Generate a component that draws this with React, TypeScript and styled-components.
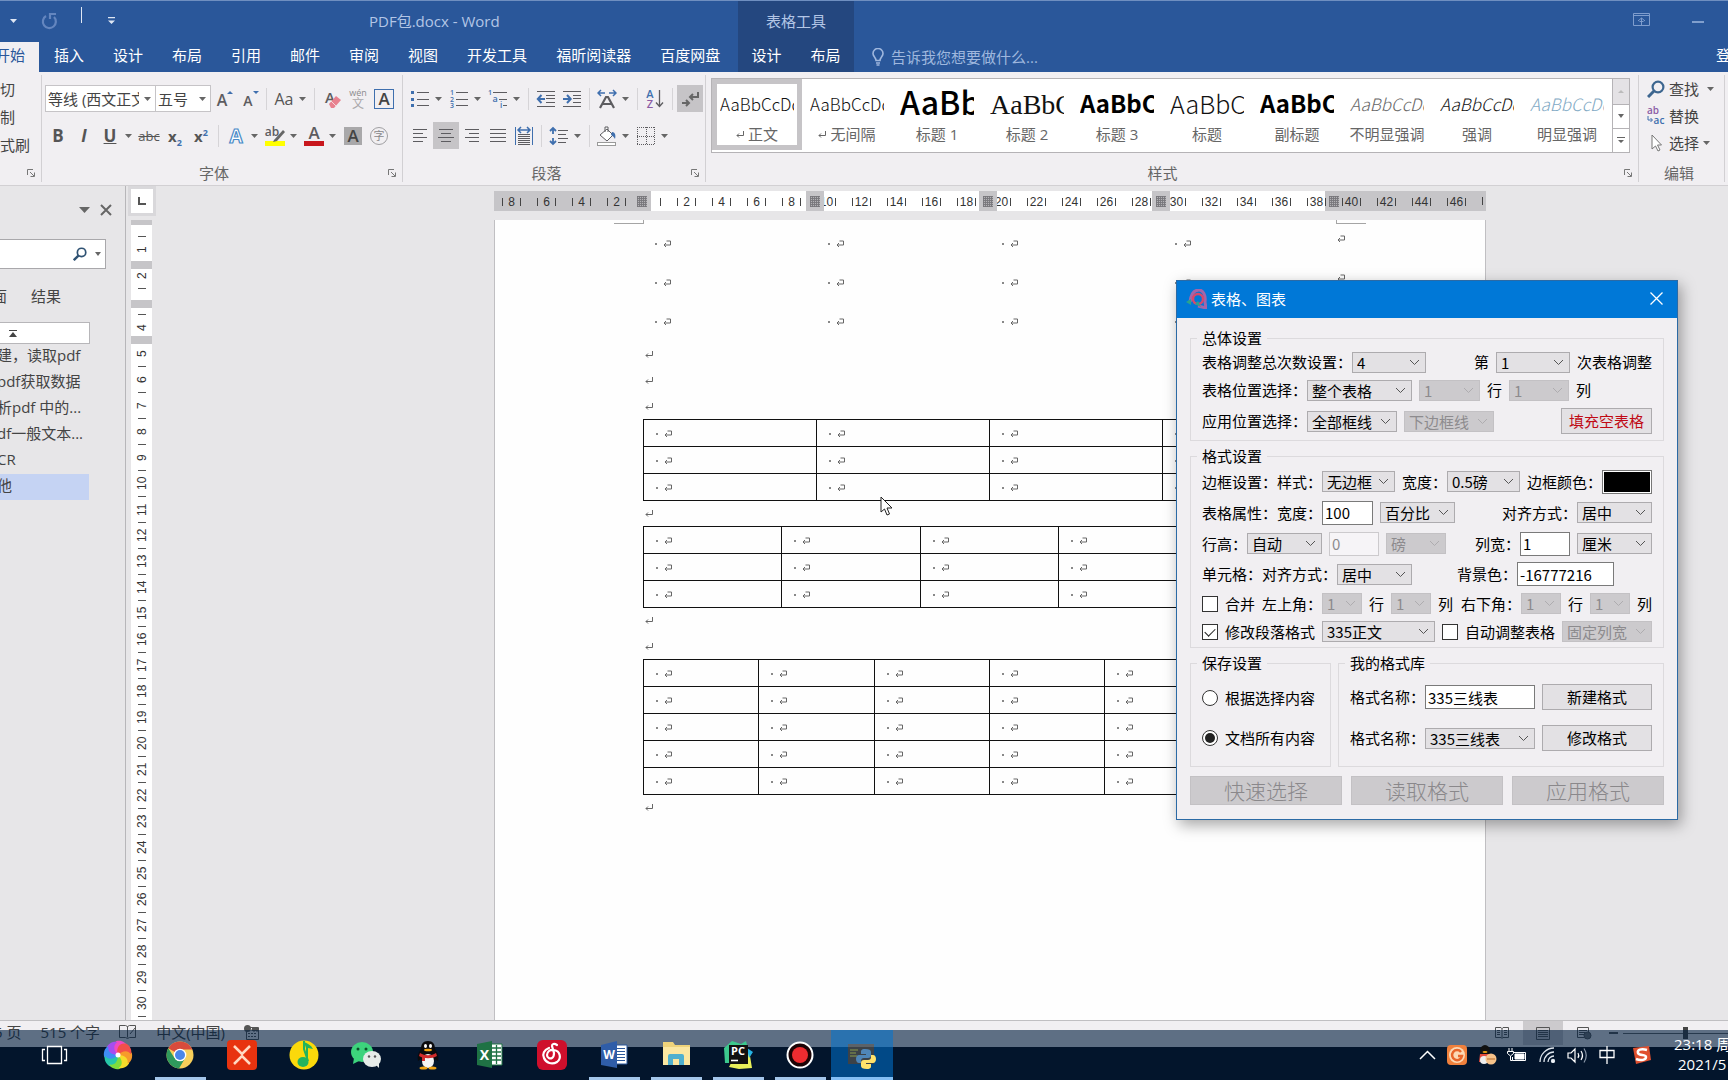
import React, { ReactNode, useState } from "react";
import styled, { createGlobalStyle, css } from "styled-components";

const ui = `"Open Sans", "Noto Sans CJK SC", sans-serif`;
const cjk = `"Noto Sans CJK SC", sans-serif`;
const ink = "#5d5c60";
const accent = "#3f6fae";

const Global = createGlobalStyle`
  * { box-sizing: border-box; }
  body { margin: 0; background: #080a10; overflow: hidden; }
  button, input, select { font: inherit; color: inherit; margin: 0; padding: 0; border: 0; border-radius: 0; background: none; }
  svg { display: block; flex: none; }
`;

const Screen = styled.div`
  position: relative;
  height: 100vh;
  display: flex;
  flex-direction: column;
  overflow: hidden;
  font: 15px/20px ${ui};
  color: #444;
`;

/* ---------- title bar and tabs ---------- */
const Header = styled.header`
  height: 72px;
  flex: none;
  display: flex;
  background: #2a579a;
  border-top: 1px solid #6f8fc0;
  white-space: nowrap;
`;
const HeaderMain = styled.div`
  width: 738px;
  flex: none;
  display: flex;
  flex-direction: column;
`;
const TitleLine = styled.div`
  height: 41px;
  padding-bottom: 2px;
  display: flex;
  align-items: center;
  color: #b3c6e6;
`;
const QuickBar = styled.div`
  width: 369px;
  padding-left: 10px;
  display: flex;
  align-items: center;
`;
const QuickButton = styled.button<{ $gap?: number }>`
  display: flex;
  margin-right: ${(p) => p.$gap ?? 0}px;
`;
const QuickRule = styled.span`
  width: 1px;
  height: 16px;
  margin: 0 26px 12px 23px;
  background: #dfe7f4;
`;
const Tabs = styled.nav`
  height: 30px;
  display: flex;
  gap: 29px;
  color: #fff;
`;
const Tab = styled.button`
  height: 30px;
  padding-bottom: 4px;
`;
const ActiveTab = styled(Tab)`
  width: 39px;
  margin-right: -14px;
  text-align: right;
  padding-right: 14px;
  direction: rtl;
  background: #f1eff2;
  color: #2a579a;
  overflow: hidden;
`;
const ContextGroup = styled.div`
  width: 116px;
  flex: none;
  display: flex;
  flex-direction: column;
  align-items: center;
  background: #24477f;
`;
const HeaderRight = styled.div`
  flex: 1;
  display: flex;
  flex-direction: column;
`;
const WindowButtons = styled.div`
  height: 41px;
  padding: 0 24px 4px 0;
  display: flex;
  align-items: center;
  justify-content: flex-end;
  gap: 42px;
`;
const TellLine = styled.div`
  height: 30px;
  display: flex;
  align-items: center;
  justify-content: space-between;
  padding-left: 18px;
  overflow: hidden;
`;
const Tell = styled.button`
  display: flex;
  align-items: center;
  gap: 7px;
  color: #9fb7de;
`;
const SignIn = styled(Tab)`
  width: 12px;
  color: #fff;
`;

/* ---------- ribbon ---------- */
const Ribbon = styled.div`
  height: 114px;
  flex: none;
  display: flex;
  padding: 3px 3px 3px 0;
  background: #f1eff2;
  border-bottom: 1px solid #d2d0d3;
  white-space: nowrap;
`;
const Group = styled.section<{ $w?: number; $pad?: number }>`
  ${(p) => (p.$w ? `width: ${p.$w}px; flex: none;` : "flex: 1; min-width: 0;")}
  padding-left: ${(p) => p.$pad ?? 0}px;
  border-right: 1px solid #d2d0d3;
  display: flex;
  flex-direction: column;
`;
const GroupBody = styled.div<{ $top?: number; $gap?: number }>`
  flex: 1;
  padding-top: ${(p) => p.$top ?? 0}px;
  display: flex;
  flex-direction: column;
  gap: ${(p) => p.$gap ?? 0}px;
`;
const GroupFoot = styled.div`
  height: 20px;
  display: flex;
  align-items: center;
  margin-bottom: -1px;
  color: #666;
`;
const FootLabel = styled.span`
  flex: 1;
  padding-right: 5px;
  text-align: center;
`;
const Launcher = styled.button`
  width: 14px;
  display: flex;
`;
const ToolRow = styled.div`
  height: 27px;
  display: flex;
  align-items: center;
`;
const Tool = styled.button<{ $split?: boolean; $on?: boolean }>`
  width: ${(p) => (p.$split ? 39 : 26)}px;
  height: 27px;
  flex: none;
  display: flex;
  align-items: center;
  gap: 2px;
  background: ${(p) => (p.$on ? "#c6c4c7" : "none")};
`;
const ToolFace = styled.span`
  width: 26px;
  display: flex;
  justify-content: center;
`;
const Sep = styled.span`
  width: 1px;
  height: 22px;
  margin: 0 4px;
  background: #d6d4d7;
`;
const Glyph = styled.span<{ $b?: boolean; $i?: boolean; $u?: boolean; $s?: boolean; $size?: number }>`
  font: ${(p) => (p.$i ? "italic" : "normal")} ${(p) => (p.$b ? 700 : 400)} ${(p) => p.$size ?? 17}px/20px ${ui};
  text-decoration: ${(p) => (p.$u ? "underline" : p.$s ? "line-through" : "none")};
  color: #555;
  sub, sup { font-size: 9px; line-height: 0; color: ${accent}; }
`;
const Combo = styled.label<{ $w: number }>`
  width: ${(p) => p.$w}px;
  height: 27px;
  margin-right: -1px;
  display: flex;
  align-items: center;
  gap: 5px;
  padding: 0 4px 0 2px;
  background: #fff;
  border: 1px solid #c6c4c7;
  input { flex: 1; min-width: 0; height: 25px; outline: none; color: #444; }
`;
const ClipItem = styled.button`
  height: 28px;
  text-align: left;
`;
const EditItem = styled.button`
  height: 27px;
  display: flex;
  align-items: center;
  gap: 4px;
  padding-left: 8px;
`;

/* ---------- style gallery ---------- */
const Gallery = styled.div`
  height: 75px;
  margin: 3px 8px 0 5px;
  display: flex;
  background: #fff;
  border: 1px solid #b5b3b6;
`;
const StyleList = styled.div`
  flex: 1;
  display: flex;
  overflow: hidden;
`;
const StyleItem = styled.button<{ $on?: boolean }>`
  width: 90px;
  height: 71px;
  flex: none;
  padding: 0 3px;
  border: 5px solid ${(p) => (p.$on ? "#c6c4c7" : "transparent")};
  display: flex;
  flex-direction: column;
  align-items: center;
  color: #666;
`;
const Preview = styled.span<{ $kind: string }>`
  width: 74px;
  height: 40px;
  overflow: hidden;
  text-align: left;
  color: #111;
  font: 300 17px/40px ${cjk};
  ${(p) => p.$kind === "h1" && css`font-size: 32px; line-height: 35px; font-weight: 500; color: #000;`}
  ${(p) => p.$kind === "h2" && css`font: 28px/42px "Liberation Serif", serif;`}
  ${(p) => p.$kind === "h3" && css`font-size: 24px; font-weight: 700; line-height: 38px; color: #000;`}
  ${(p) => p.$kind === "title" && css`font-size: 25px; line-height: 38px;`}
  ${(p) => p.$kind === "soft" && css`font-style: italic; color: #666;`}
  ${(p) => p.$kind === "em" && css`font-style: italic;`}
  ${(p) => p.$kind === "strong" && css`font-style: italic; color: #7fa9c4;`}
`;
const StyleName = styled.span`
  display: flex;
  align-items: center;
  gap: 4px;
`;
const GalleryNav = styled.div`
  width: 17px;
  display: grid;
  grid-template-rows: 26px 1fr 1fr;
  border-left: 1px solid #b5b3b6;
  button { display: grid; place-items: center; border-bottom: 1px solid #b5b3b6; }
  button:first-child { background: #e4e2e5; }
  button:last-child { border-bottom: 0; }
`;

/* ---------- workspace ---------- */
const Workspace = styled.main`
  flex: 1;
  min-height: 0;
  display: flex;
  background: #e7e6e8;
  overflow: hidden;
`;
const NavPane = styled.aside`
  width: 126px;
  flex: none;
  border-right: 1px solid #b7b6b9;
  overflow: hidden;
  white-space: nowrap;
`;
const PaneTop = styled.div`
  height: 53px;
  padding: 0 13px 5px 0;
  display: flex;
  align-items: center;
  justify-content: flex-end;
  gap: 10px;
`;
const PaneSearch = styled.label`
  width: 106px;
  height: 30px;
  display: flex;
  align-items: center;
  gap: 8px;
  padding-right: 4px;
  background: #fff;
  border: 1px solid #a9a8ab;
  border-left: 0;
  input { flex: 1; min-width: 0; outline: none; }
`;
const PaneTabs = styled.div`
  height: 53px;
  display: flex;
  align-items: center;
  gap: 24px;
  margin-left: -8px;
  padding-top: 5px;
`;
const PaneJump = styled.button`
  width: 90px;
  height: 22px;
  display: flex;
  align-items: center;
  padding-left: 9px;
  background: #fff;
  border: 1px solid #b7b6b9;
  border-left: 0;
`;
const Outline = styled.ul`
  list-style: none;
  margin: 0;
  padding: 0;
  width: 89px;
`;
const OutlineItem = styled.li<{ $on?: boolean }>`
  height: 26px;
  background: ${(p) => (p.$on ? "#c5d3f3" : "none")};
  a { display: block; margin-left: -3px; line-height: 22px; color: #444; text-decoration: none; }
`;
const RulerColumn = styled.div`
  width: 30px;
  flex: none;
  display: flex;
  flex-direction: column;
  padding-left: 2px;
`;
const Corner = styled.button`
  width: 28px;
  height: 30px;
  flex: none;
  margin-bottom: 4px;
  display: grid;
  place-items: center;
  background: #fff;
  border: 3px solid #d9d8db;
`;
const VRuler = styled.div`
  position: relative;
  flex: 1;
  width: 21px;
  margin-left: 3px;
  padding-top: 16px;
  background: #fff;
  overflow: hidden;
`;
const VCell = styled.div`
  height: 26px;
  display: flex;
  flex-direction: column;
  align-items: center;
  font: 12px/14px "Liberation Sans", sans-serif;
  color: #333;
  &::before { content: ""; width: 8px; height: 1px; flex: none; background: #555; }
  span { flex: 1; writing-mode: vertical-rl; transform: rotate(180deg); text-align: center; }
`;
const VBand = styled.i<{ $y: number }>`
  position: absolute;
  left: 0;
  right: 0;
  top: ${(p) => p.$y}px;
  height: 8px;
  background: #c6c5c8;
`;
const DocColumn = styled.div`
  width: 992px;
  flex: none;
  margin-left: 338px;
  padding-top: 5px;
  display: flex;
  flex-direction: column;
`;
const HRuler = styled.div`
  position: relative;
  height: 20px;
  flex: none;
  margin-bottom: 9px;
  display: flex;
  align-items: center;
  background: linear-gradient(to right, #c6c5c8 157px, #fff 157px, #fff 831px, #c6c5c8 831px);
`;
const HCell = styled.span`
  width: 35px;
  padding: 1px 8px 0;
  flex: none;
  display: flex;
  justify-content: space-between;
  align-items: center;
  font: 12px/14px "Liberation Sans", sans-serif;
  color: #333;
  &::before, &::after { content: ""; width: 1px; height: 8px; background: #444; flex: none; }
`;
const HEnd = styled.span`
  width: 1px;
  height: 8px;
  margin-left: 8px;
  background: #444;
`;
const HMark = styled.i<{ $x: number; $w?: number }>`
  position: absolute;
  left: ${(p) => p.$x}px;
  top: 0;
  width: ${(p) => p.$w ?? 18}px;
  height: 20px;
  display: grid;
  place-items: center;
  background: #c6c5c8;
`;
const Paper = styled.article`
  position: relative;
  flex: 1;
  padding: 3px 149px 0 148px;
  background: #fefefe;
  border: solid #c0bfc2;
  border-width: 0 1px;
`;
const MarginMark = styled.i<{ $right?: boolean }>`
  position: absolute;
  top: 0;
  width: 30px;
  height: 4px;
  border-bottom: 1px solid #a5a5a5;
  ${(p) => (p.$right ? "right: 119px; border-left: 1px solid #a5a5a5;" : "left: 119px; border-right: 1px solid #a5a5a5;")}
`;
const Para = styled.p`
  margin: 0;
  height: 26px;
  display: flex;
  align-items: center;
  padding: 1px 0 0 2px;
`;
const DocTable = styled.table<{ $plain?: boolean }>`
  width: 100%;
  table-layout: fixed;
  border-collapse: collapse;
  margin-bottom: ${(p) => (p.$plain ? 1 : -1)}px;
  td {
    position: relative;
    height: ${(p) => (p.$plain ? 39 : 27)}px;
    padding: 2px 0 0 12px;
    border: ${(p) => (p.$plain ? "0" : "1px solid #111")};
  }
`;
const CellEnd = styled.span`
  display: flex;
  align-items: center;
  gap: 6px;
  &::before { content: ""; width: 2px; height: 2px; background: #888; }
`;
const RowEnd = styled.span`
  position: absolute;
  right: -10px;
  top: 12px;
`;
const Pointer = styled.svg`
  position: absolute;
  left: 880px;
  top: 496px;
`;

/* ---------- status bar ---------- */
const Status = styled.footer`
  height: 27px;
  flex: none;
  margin-bottom: 33px;
  display: flex;
  align-items: center;
  justify-content: space-between;
  background: #f1eff2;
  border-top: 1px solid #c0bfc2;
  white-space: nowrap;
  overflow: hidden;
`;
const StatusLeft = styled.div`
  display: flex;
  align-items: center;
  gap: 19px;
  margin-left: -6px;
  padding-bottom: 4px;
`;
const StatusRight = styled.div`
  height: 100%;
  padding-bottom: 2px;
  display: flex;
  align-items: center;
`;
const ViewButton = styled.button<{ $on?: boolean }>`
  width: ${(p) => (p.$on ? 40 : 42)}px;
  height: 100%;
  display: grid;
  place-items: center;
  background: ${(p) => (p.$on ? "#cccacd" : "none")};
`;
const Zoom = styled.input`
  appearance: none;
  width: 128px;
  height: 14px;
  margin: 0 -23px 0 4px;
  background: linear-gradient(#666, #666) center / 100% 1px no-repeat;
  &::-webkit-slider-thumb { appearance: none; width: 5px; height: 12px; background: #444; }
`;

/* ---------- taskbar ---------- */
const Taskbar = styled.div`
  position: absolute;
  left: 0;
  right: 0;
  bottom: 0;
  height: 50px;
  display: flex;
  justify-content: space-between;
  background: rgba(0, 30, 62, 0.61);
  overflow: hidden;
`;
const Apps = styled.div`
  display: flex;
  margin-left: -37px;
`;
const App1 = styled.button<{ $state?: string }>`
  width: 62px;
  height: 50px;
  display: grid;
  place-items: center;
  position: relative;
  background: ${(p) => (p.$state === "active" ? "rgba(0, 116, 212, 0.55)" : "none")};
  &::after {
    content: "";
    display: ${(p) => (p.$state ? "block" : "none")};
    position: absolute;
    bottom: 0;
    left: ${(p) => (p.$state === "active" ? 0 : 6)}px;
    right: ${(p) => (p.$state === "active" ? 0 : 5)}px;
    height: 3px;
    background: ${(p) => (p.$state === "active" ? "#84bff5" : "#a4c6ea")};
  }
`;
const Tray = styled.div`
  display: flex;
  align-items: center;
  color: #fff;
`;
const TrayButton = styled.button<{ $w?: number }>`
  width: ${(p) => p.$w ?? 30}px;
  display: grid;
  place-items: center;
`;
const Clock = styled.time`
  width: 54px;
  margin-left: 12px;
  padding-bottom: 2px;
  display: flex;
  flex-direction: column;
  align-items: flex-start;
  white-space: nowrap;
  span + span { padding-left: 4px; }
`;

/* ---------- dialog ---------- */
const Dialog = styled.form`
  position: absolute;
  left: 1176px;
  top: 280px;
  width: 502px;
  border: 1px solid #2b6aa5;
  background: #f1eff2;
  box-shadow: 3px 5px 14px rgba(0, 0, 0, 0.35);
  font: 15px/20px ${cjk};
  color: #000;
  white-space: nowrap;
`;
const DialogTitle = styled.div`
  height: 37px;
  display: flex;
  align-items: center;
  gap: 4px;
  padding: 0 14px 2px 9px;
  background: #0078d7;
  color: #fff;
  button { margin-left: auto; }
`;
const DialogBody = styled.div`
  padding: 10px 13px 14px;
  display: flex;
  flex-direction: column;
  gap: 5px;
`;
const Box = styled.fieldset<{ $bottom?: number }>`
  min-width: 0;
  margin: 0;
  padding: 0 11px ${(p) => p.$bottom ?? 2}px 11px;
  border: 1px solid #dcdadd;
  legend { height: 20px; padding: 0 5px; margin-left: -5px; }
`;
const Pair = styled.div`
  display: grid;
  grid-template-columns: 141px 1fr;
  gap: 7px;
`;
const Line = styled.div<{ $h: number }>`
  height: ${(p) => p.$h}px;
  display: flex;
  align-items: center;
  gap: 7px;
`;
const Field = styled.label<{ $gap?: boolean; $push?: boolean; $pr?: number }>`
  display: flex;
  align-items: center;
  gap: ${(p) => (p.$gap ? 7 : 0)}px;
  margin-left: ${(p) => (p.$push ? "auto" : "0")};
  padding-right: ${(p) => p.$pr ?? 0}px;
`;
const Pick = styled.span<{ $w: number }>`
  width: ${(p) => p.$w}px;
  display: grid;
  align-items: center;
  > * { grid-area: 1 / 1; }
  > svg { justify-self: end; margin-right: 6px; pointer-events: none; }
  select {
    appearance: none;
    width: 100%;
    height: 21px;
    padding-left: 4px;
    line-height: 19px;
    background: #e3e1e4;
    border: 1px solid #adabae;
    opacity: 1;
  }
  select:disabled { background: #cccacd; border-color: #c3c1c4; color: #8d8b8e; }
`;
const Text = styled.input<{ $w: number }>`
  width: ${(p) => p.$w}px;
  height: 24px;
  padding-left: 2px;
  background: #fff;
  border: 1px solid #7a7a7a;
  &:disabled { background: #f6f4f7; border-color: #cccacd; color: #8d8b8e; }
`;
const Swatch = styled.button`
  width: 50px;
  height: 24px;
  background: #000;
  border: 1px solid #777;
  box-shadow: inset 0 0 0 1px #fff;
`;
const Check = styled.input`
  appearance: none;
  width: 16px;
  height: 16px;
  flex: none;
  background: #fff;
  border: 1px solid #333;
  &:checked::after {
    content: "";
    display: block;
    width: 9px;
    height: 5px;
    margin: 3px 0 0 2px;
    border: solid #222;
    border-width: 0 0 1px 1px;
    transform: rotate(-45deg);
  }
`;
const Radio = styled(Check)`
  border-radius: 50%;
  &:checked::after {
    width: 10px;
    height: 10px;
    margin: 2px;
    border: 0;
    border-radius: 50%;
    background: #222;
    transform: none;
  }
`;
const Push = styled.button<{ $red?: boolean }>`
  height: 26px;
  flex: ${(p) => (p.$red ? "none" : 1)};
  width: ${(p) => (p.$red ? "91px" : "auto")};
  margin-left: ${(p) => (p.$red ? "auto" : "0")};
  background: #e3e1e4;
  border: 1px solid #adabae;
  color: ${(p) => (p.$red ? "#c00a14" : "#000")};
`;
const Actions = styled.div`
  margin-top: 4px;
  display: grid;
  grid-template-columns: repeat(3, 1fr);
  gap: 9px;
`;
const BigButton = styled.button`
  height: 29px;
  background: #cccacd;
  border: 1px solid #c3c1c4;
  font-size: 21px;
  line-height: 25px;
  font-weight: 300;
  color: #8a888b;
`;

/* ---------- small drawings ---------- */
const Caret = ({ c = "#666", s = 7 }: { c?: string; s?: number }) => (
  <svg width={s} height={s > 8 ? 6 : 4} viewBox="0 0 8 4" preserveAspectRatio="none"><path d="M0 0h8L4 4z" fill={c} /></svg>
);
const Bars = ({ rows, x = 0 }: { rows: [number, number][]; x?: number }) => (
  <>{rows.map(([a, b], i) => <path key={i} d={`M${x + a} ${2.5 + i * 4}H${x + b}`} stroke={ink} />)}</>
);
const Ico = ({ children, w = 20, h = 20 }: { children: ReactNode; w?: number; h?: number }) => (
  <svg width={w} height={h} viewBox={`0 0 ${w} ${h}`} fill="none">{children}</svg>
);
const ParaMark = () => (
  <svg width="8" height="7" viewBox="0 0 8 7" fill="none" stroke="#666"><path d="M7.5 0v4.5H1M3 2.5l-2 2 2 2" /></svg>
);
const CellMark = () => (
  <svg width="9" height="8" viewBox="0 0 9 8" fill="none" stroke="#666"><path d="M3.5 1h4v4H1M3 3L1 5l2 2" /></svg>
);
const Hatch = () => (
  <svg width="10" height="11" viewBox="0 0 10 11"><rect width="10" height="11" fill="#b4b3b6" /><path d="M.5 0v11M2.5 0v11M4.5 0v11M6.5 0v11M8.5 0v11M0 .5h10M0 2.5h10M0 4.5h10M0 6.5h10M0 8.5h10M0 10.5h10" stroke="#77767a" strokeWidth=".9" /></svg>
);
const Lens = ({ s = 18, c = "#3d668f" }: { s?: number; c?: string }) => (
  <svg width={s} height={s} viewBox="0 0 18 18" fill="none" stroke={c} strokeWidth="2.2"><circle cx="11" cy="7" r="5.4" /><path d="M7 11L1 17" strokeWidth="3" /></svg>
);
const LauncherIcon = () => (
  <svg width="8" height="8" viewBox="0 0 8 8" fill="none" stroke="#777"><path d="M.5 6V.5H6M3 3l4 4M7.5 3.5v4h-4" /></svg>
);

const LETTER = (txt: string, size = 17, weight = 600, fill = ink, x = 10, y = 16) => (
  <text x={x} y={y} fontSize={size} fontWeight={weight} fill={fill} textAnchor="middle" fontFamily="Open Sans, sans-serif">{txt}</text>
);

const icons: Record<string, ReactNode> = {
  grow: <Ico>{LETTER("A", 16, 600, ink, 9, 17)}<path d="M14 5l3-3 3 3z" fill={accent} /></Ico>,
  shrink: <Ico>{LETTER("A", 14, 600, ink, 9, 17)}<path d="M14 2h6l-3 3z" fill={accent} /></Ico>,
  clear: <Ico>{LETTER("A", 15, 600, ink, 8, 14)}<path d="M7 15l7-8 5 4-7 8H9z" fill="#e8818f" /><path d="M9 12l5 5" stroke="#f5d5da" /></Ico>,
  wen: <Ico>{LETTER("wén", 9, 400, "#8a8a8c", 10, 7)}<text x="10" y="19" fontSize="12" fill="#aaa8ab" textAnchor="middle" fontFamily="Noto Sans CJK SC">文</text></Ico>,
  frame: <Ico><rect x=".5" y=".5" width="19" height="19" stroke="#3f6fae" />{LETTER("A", 17, 600, "#444")}</Ico>,
  outlineA: <Ico><text x="10" y="17" fontSize="19" fontWeight="700" fill="#fff" stroke="#4a8bc8" strokeWidth="1.2" textAnchor="middle" fontFamily="Open Sans">A</text></Ico>,
  marker: <Ico w={22} h={22}><rect x="1" y="16" width="20" height="5" fill="#ffff00" />{LETTER("ab", 12, 600, ink, 8, 11)}<path d="M10 15l9-10 2 2-8 9-4 1z" fill="#666" /></Ico>,
  red: <Ico w={22} h={22}>{LETTER("A", 17, 600, ink, 11, 14)}<rect x="1" y="16" width="20" height="5" fill="#c8161d" /></Ico>,
  shade: <Ico w={18}><rect y="1" width="18" height="18" fill="#a9a8aa" />{LETTER("A", 17, 600, "#444", 9, 16)}</Ico>,
  circle: <Ico><circle cx="10" cy="10" r="8.5" stroke="#a09fa2" /><text x="10" y="14" fontSize="11" fill="#88878a" textAnchor="middle" fontFamily="Noto Sans CJK SC">字</text></Ico>,
  bullets: <Ico><path d="M1 2h3v3H1zM1 9h3v3H1zM1 15h3v3H1z" fill={accent} /><path d="M7 3.5h12M7 10.5h12M7 16.5h12" stroke={ink} /></Ico>,
  numbers: <Ico>{LETTER("1", 7, 600, accent, 3, 6)}{LETTER("2", 7, 600, accent, 3, 13)}{LETTER("3", 7, 600, accent, 3, 19)}<path d="M7 3.5h12M7 10.5h12M7 16.5h12" stroke={ink} /></Ico>,
  multi: <Ico>{LETTER("1", 7, 600, accent, 2, 6)}{LETTER("a", 9, 600, accent, 7, 13)}{LETTER("i", 8, 600, accent, 13, 19)}<path d="M5 3.5h14M11 10.5h8M15 16.5h4" stroke={ink} /></Ico>,
  outdent: <Ico><path d="M1 2.5h18M10 6.5h9M10 9.5h9M10 13.5h9M1 17.5h18" stroke={ink} /><path d="M9 10H2M5.5 6L1.8 10l3.7 4" stroke={accent} strokeWidth="2" /></Ico>,
  indent: <Ico><path d="M1 2.5h18M11 6.5h8M11 9.5h8M11 13.5h8M1 17.5h18" stroke={ink} /><path d="M1 10h7M5 6l3.7 4L5 14" stroke={accent} strokeWidth="2" /></Ico>,
  scale: <Ico><path d="M1 4h7M4 1L1 4l3 3M19 4h-7M16 1l3 3-3 3" stroke={accent} strokeWidth="1.5" /><path d="M3 19l6-11h2l6 11M6 15h8" stroke={ink} strokeWidth="2.2" /></Ico>,
  sort: <Ico>{LETTER("A", 11, 600, accent, 5, 9)}{LETTER("Z", 11, 600, "#8b5ba5", 5, 19)}<path d="M14.5 1v16M11 13.5l3.5 4 3.5-4" stroke={ink} strokeWidth="1.3" /></Ico>,
  marks: <Ico><path d="M18 3v5h-7M13 5l-3 3 3 3M2 14h7M6 11l3 3-3 3" stroke="#666" strokeWidth="2" /></Ico>,
  left: <Ico h={17}><Bars rows={[[3, 17], [3, 13], [3, 17], [3, 13]]} /></Ico>,
  center: <Ico h={17}><Bars rows={[[3, 17], [5, 15], [2, 18], [5, 15]]} /></Ico>,
  right: <Ico h={17}><Bars rows={[[3, 17], [7, 17], [3, 17], [7, 17]]} /></Ico>,
  justify: <Ico h={17}><Bars rows={[[2, 18], [2, 18], [2, 18], [2, 18]]} /></Ico>,
  spread: <Ico><path d="M1.5 1v18M18.5 1v18" stroke={accent} /><path d="M4 4h12M7 1L4 4l3 3M13 1l3 3-3 3" stroke={accent} strokeWidth="1.5" /><path d="M4 8.5h12M4 10.5h12M4 12.5h12M4 14.5h12M4 16.5h12M4 18.5h12" stroke={ink} /></Ico>,
  spacing: <Ico><path d="M4 2v6M1 5l3-3 3 3M4 12v6M1 15l3 3 3-3" stroke={accent} strokeWidth="1.8" /><path d="M9 4.5h10M9 8.5h8M9 12.5h10M9 16.5h8" stroke={ink} /></Ico>,
  bucket: <Ico><path d="M3 9l7-6 6 6-6 6zM8 6V1h3v5" stroke={ink} fill="#fff" /><path d="M15 6c3 0 4 3 3 7-1-2-2-3-4-4z" fill={accent} /><rect x=".5" y="16.5" width="18" height="3" stroke="#999" fill="#fff" /></Ico>,
  border: <Ico><path d="M1.5 1v18M10.5 1v18M18.5 1v18M1 1.5h18M1 10.5h18M1 18.5h18" stroke={ink} strokeDasharray="1 1" /></Ico>,
};

const T = ({ i, split, on, label }: { i: string; split?: boolean; on?: boolean; label?: ReactNode }) => (
  <Tool $split={split} $on={on} aria-label={i}>
    <ToolFace>{label ?? icons[i]}</ToolFace>
    {split && <Caret />}
  </Tool>
);

const Select = ({ v, w, off }: { v: string; w: number; off?: boolean }) => (
  <Pick $w={w}>
    <select disabled={off} defaultValue={v}><option>{v}</option></select>
    <svg width="11" height="7" viewBox="0 0 11 7" fill="none" stroke={off ? "#aeacaf" : "#555"}><path d="M1 1l4.500 4.500L10 1" /></svg>
  </Pick>
);

const styleItems: [string, string, string, boolean?][] = [
  ["AaBbCcDd", "正文", "body", true],
  ["AaBbCcDd", "无间隔", "body", true],
  ["AaBb", "标题 1", "h1"],
  ["AaBbC", "标题 2", "h2"],
  ["AaBbC", "标题 3", "h3"],
  ["AaBbC", "标题", "title"],
  ["AaBbC", "副标题", "h3"],
  ["AaBbCcDd", "不明显强调", "soft"],
  ["AaBbCcDd", "强调", "em"],
  ["AaBbCcDd", "明显强调", "strong"],
];

const Grid = ({ rows, cols, plain }: { rows: number; cols: number; plain?: boolean }) => (
  <DocTable $plain={plain}>
    <tbody>
      {Array.from({ length: rows }, (_, r) => (
        <tr key={r}>
          {Array.from({ length: cols }, (_, c) => (
            <td key={c}>
              <CellEnd><CellMark /></CellEnd>
              {c === cols - 1 && <RowEnd><CellMark /></RowEnd>}
            </td>
          ))}
        </tr>
      ))}
    </tbody>
  </DocTable>
);
const P = () => <Para><ParaMark /></Para>;

/* ---------- taskbar drawings ---------- */
const Python = () => (
  <g>
    <path d="M9 0C5 0 5 2 5 3v2h5v1H3C1 6 0 8 0 10s1 4 3 4h2v-2c0-2 1-3 3-3h4c2 0 3-1 3-3V3c0-2-2-3-6-3z" fill="#4f86b8" />
    <path d="M11 20c4 0 4-2 4-3v-2h-5v-1h7c2 0 3-2 3-4s-1-4-3-4h-2v2c0 2-1 3-3 3H8c-2 0-3 1-3 3v3c0 2 2 3 6 3z" fill="#ffe26b" />
  </g>
);
const apps: { name: string; state?: string; art: ReactNode }[] = [
  { name: "Cortana", art: <circle cx="12" cy="15" r="7" stroke="#fff" strokeWidth="2.5" fill="none" /> },
  { name: "Task view", art: <path d="M6.5 6.500h14v17h-14zM4 9.500H1.500v11H4M23 9.500h2.500v11H23" stroke="#fff" strokeWidth="1.3" fill="none" /> },
  { name: "Browser", art: <g>{["#f04ac0", "#a64df0", "#3f8df5", "#27c6a9", "#7fdc3c", "#f7dc2a", "#f79a2a", "#f2504a"].map((c, i) => <path key={c} d="M15 15C9 11 9 3 16 1c6 0 9 4 9 6-5-2-9 2-10 8z" fill={c} transform={`rotate(${i * -45 - 10} 15 15)`} />)}<circle cx="15" cy="15" r="2.5" fill="#fff" /></g> },
  { name: "Chrome", state: "open", art: <g><circle cx="15" cy="15" r="13.5" fill="#f7cf5a" /><path d="M15 15L3.3 8.3A13.5 13.5 0 0 1 26.7 8.3L27.500 9.500H15z" fill="#d84b3c" /><path d="M3.3 8.3A13.5 13.5 0 0 0 14 28.500L20.500 17.500 9.500 18z" fill="#2f9a5c" /><circle cx="15" cy="15" r="6.3" fill="#fff" /><circle cx="15" cy="15" r="5" fill="#4a86e8" /></g> },
  { name: "XMind", art: <g><rect width="30" height="30" rx="4" fill="#e8330f" /><path d="M7 6l8 8 8-8M7 24l8-8 8 8" stroke="#ffd9c2" strokeWidth="2.5" fill="none" /></g> },
  { name: "QQ Music", art: <g><circle cx="15" cy="15" r="14.5" fill="#fbd90b" /><ellipse cx="14" cy="22" rx="5.5" ry="5" fill="#23b35d" /><path d="M17 23V8l-2-6c3 1 7 3 9 7l-5-1v14z" fill="#23b35d" /><path d="M15 1v8l4 12" stroke="#23b35d" strokeWidth="2" fill="none" /></g> },
  { name: "WeChat", art: <g><ellipse cx="11" cy="12" rx="11" ry="10" fill="#3dd37c" /><path d="M3 18l-1 6 6-3z" fill="#3dd37c" /><circle cx="7" cy="9" r="1.5" fill="#0c4f2b" /><circle cx="15" cy="9" r="1.5" fill="#0c4f2b" /><ellipse cx="21" cy="19" rx="9" ry="8" fill="#e6ebe8" /><path d="M25 25l3 3v-5z" fill="#e6ebe8" /><circle cx="18" cy="16.5" r="1.2" fill="#555" /><circle cx="24" cy="16.5" r="1.2" fill="#555" /></g> },
  { name: "QQ", art: <g><path d="M15 1c-5 0-7 3-7 8-3 4-4 8-3 12l3-2c1 5 4 8 7 8s6-3 7-8l3 2c1-4 0-8-3-12 0-5-2-8-7-8z" fill="#0b0b0d" /><ellipse cx="15" cy="21" rx="6" ry="7" fill="#f4f4f4" /><path d="M7 13c5 3 11 3 16 0l1 3c-5 3-13 3-18 0z" fill="#d22b2b" /><path d="M9 16h3v5H9z" fill="#d22b2b" /><ellipse cx="12.5" cy="6" rx="1.5" ry="2" fill="#fff" /><ellipse cx="17.5" cy="6" rx="1.5" ry="2" fill="#fff" /><ellipse cx="15" cy="10" rx="4" ry="1.3" fill="#f2a313" /><ellipse cx="10.5" cy="28" rx="4" ry="1.6" fill="#f2a313" /><ellipse cx="19.5" cy="28" rx="4" ry="1.6" fill="#f2a313" /></g> },
  { name: "Excel", art: <g><path d="M16 4h11v21H16z" fill="#fff" stroke="#1f7244" /><path d="M17 8h9M17 12h9M17 16h9M17 20h9M21.500 5v19" stroke="#1f7244" strokeWidth="1.3" /><path d="M2 4l15-3v27L2 25z" fill="#1f7244" />{LETTER("X", 14, 700, "#fff", 9.5, 20)}</g> },
  { name: "NetEase Music", art: <g><rect width="30" height="30" rx="6" fill="#cf0f2c" /><path d="M12 8c-5 2-7 6-5 10 2 5 8 7 13 4 5-4 3-11-3-12-4-1-7 2-7 5s3 4 5 3 2-3 2-5l-2-7c0-2 2-3 5-1" stroke="#fff" strokeWidth="2.2" fill="none" strokeLinecap="round" /></g> },
  { name: "Word", state: "open", art: <g><path d="M16 5h12v19H16z" fill="#fff" stroke="#2b579a" /><path d="M18 8.500h8M18 11.500h8M18 14.500h8M18 17.500h8M18 20.500h8" stroke="#2b579a" /><path d="M2 5l16-4v27L2 25z" fill="#2f5da8" />{LETTER("W", 12, 700, "#fff", 10, 19)}</g> },
  { name: "Explorer", state: "open", art: <g><path d="M2 2h10l2 3h15v20H2z" fill="#efd37a" /><path d="M2 7h27v18H2z" fill="#fbe7a1" /><path d="M7 25V16q0-2 2-2h12q2 0 2 2v9h-5v-6h-6v6z" fill="#4fb0cf" /></g> },
  { name: "PyCharm", state: "open", art: <g><path d="M1 8L9 1l9 3 5-3 2 8-6 14H2z" fill="#3cc98e" /><path d="M20 8l9 4-2 4 2 12-13 1-10-2 3-6z" fill="#e9f05a" /><path d="M24 8l6 4-4 6z" fill="#25b3e6" /><rect x="6" y="5" width="19" height="19" fill="#111" />{LETTER("PC", 11, 700, "#fff", 15, 15)}<path d="M8 20.500h7" stroke="#fff" strokeWidth="1.6" /></g> },
  { name: "Recorder", state: "open", art: <g><circle cx="15" cy="15" r="12.5" fill="#1c0406" stroke="#fff" strokeWidth="2" /><circle cx="15" cy="15" r="8" fill="#ee2c30" /></g> },
  { name: "Python", state: "active", art: <g><path d="M1 4h26v20H1z" fill="#3c4248" /><path d="M1 4h26v3H1z" fill="#5c6268" /><path d="M3 10h8M3 13h6M3 16h7" stroke="#8a9a4a" /><g transform="translate(9 9)"><Python /></g></g> },
];

export default function App() {
  const [scope, setScope] = useState("all");
  return (
    <Screen>
      <Global />
      <Header>
        <HeaderMain>
          <TitleLine>
            <QuickBar>
              <QuickButton $gap={24} aria-label="撤销"><Caret c="#dfe7f4" /></QuickButton>
              <QuickButton aria-label="重复">
                <svg width="17" height="18" viewBox="0 0 17 18" fill="none" stroke="#6486bf" strokeWidth="2.2"><path d="M5 4a6.500 6.500 0 1 0 8 1M9 7V2h6" /></svg>
              </QuickButton>
              <QuickRule />
              <QuickButton aria-label="自定义快速访问工具栏">
                <svg width="7" height="7" viewBox="0 0 8 8"><path d="M0 0h8v1.500H0zM0 4h8L4 8z" fill="#dfe7f4" /></svg>
              </QuickButton>
            </QuickBar>
            <span>PDF包.docx - Word</span>
          </TitleLine>
          <Tabs>
            <ActiveTab>开始</ActiveTab>
            {["插入", "设计", "布局", "引用", "邮件", "审阅", "视图", "开发工具", "福昕阅读器", "百度网盘"].map((t) => <Tab key={t}>{t}</Tab>)}
          </Tabs>
        </HeaderMain>
        <ContextGroup>
          <TitleLine>表格工具</TitleLine>
          <Tabs><Tab>设计</Tab><Tab>布局</Tab></Tabs>
        </ContextGroup>
        <HeaderRight>
          <WindowButtons>
            <QuickButton aria-label="功能区显示选项">
              <svg width="17" height="13" viewBox="0 0 17 13" fill="none" stroke="#7f9dcd"><path d="M.5.5h16v12H.5zM.5 2.500h16M8.500 12V5M5 8l3.500-3L12 8M6.500 8.500h4" /></svg>
            </QuickButton>
            <QuickButton aria-label="最小化"><svg width="12" height="6"><path d="M0 5h12" stroke="#9fb7de" strokeWidth="1.5" /></svg></QuickButton>
          </WindowButtons>
          <TellLine>
            <Tell>
              <svg width="12" height="18" viewBox="0 0 12 18" fill="none" stroke="#9fb7de" strokeWidth="1.6"><path d="M4 12.500c0-3-3-4-3-7a5 5 0 0 1 10 0c0 3-3 4-3 7zM4 15h4M4.500 17h3" /></svg>
              告诉我您想要做什么...
            </Tell>
            <SignIn>登</SignIn>
          </TellLine>
        </HeaderRight>
      </Header>

      <Ribbon>
        <Group $w={42}>
          <GroupBody><ClipItem>切</ClipItem><ClipItem>制</ClipItem><ClipItem>式刷</ClipItem></GroupBody>
          <GroupFoot><FootLabel /><Launcher aria-label="剪贴板"><LauncherIcon /></Launcher></GroupFoot>
        </Group>
        <Group $w={361} $pad={3}>
          <GroupBody $top={10} $gap={10}>
            <ToolRow>
              <Combo $w={111}><input aria-label="字体" defaultValue="等线 (西文正文)" /><Caret /></Combo>
              <Combo $w={56}><input aria-label="字号" defaultValue="五号" /><Caret /></Combo>
              <T i="grow" /><T i="shrink" /><Sep />
              <T i="大小写" split label={<Glyph $size={16}>Aa</Glyph>} /><Sep />
              <T i="clear" /><T i="wen" /><T i="frame" />
            </ToolRow>
            <ToolRow>
              <T i="粗体" label={<Glyph $b>B</Glyph>} />
              <T i="斜体" label={<Glyph $b $i>I</Glyph>} />
              <T i="下划线" split label={<Glyph $b $u>U</Glyph>} />
              <T i="删除线" label={<Glyph $s $size={13}>abc</Glyph>} />
              <T i="下标" label={<Glyph $b $size={15}>x<sub>2</sub></Glyph>} />
              <T i="上标" label={<Glyph $b $size={15}>x<sup>2</sup></Glyph>} /><Sep />
              <T i="outlineA" split /><T i="marker" split /><T i="red" split /><T i="shade" /><T i="circle" />
            </ToolRow>
          </GroupBody>
          <GroupFoot><FootLabel>字体</FootLabel><Launcher aria-label="字体设置"><LauncherIcon /></Launcher></GroupFoot>
        </Group>
        <Group $w={303} $pad={4}>
          <GroupBody $top={10} $gap={10}>
            <ToolRow>
              <T i="bullets" split /><T i="numbers" split /><T i="multi" split /><Sep />
              <T i="outdent" /><T i="indent" /><Sep /><T i="scale" split /><Sep /><T i="sort" /><Sep /><T i="marks" on />
            </ToolRow>
            <ToolRow>
              <T i="left" /><T i="center" on /><T i="right" /><T i="justify" /><T i="spread" /><Sep />
              <T i="spacing" split /><Sep /><T i="bucket" split /><T i="border" split />
            </ToolRow>
          </GroupBody>
          <GroupFoot><FootLabel>段落</FootLabel><Launcher aria-label="段落设置"><LauncherIcon /></Launcher></GroupFoot>
        </Group>
        <Group>
          <GroupBody>
            <Gallery>
              <StyleList>
                {styleItems.map(([txt, name, kind, mark], i) => (
                  <StyleItem key={name} $on={i === 0}>
                    <Preview $kind={kind}>{txt}</Preview>
                    <StyleName>{mark && <ParaMark />}{name}</StyleName>
                  </StyleItem>
                ))}
              </StyleList>
              <GalleryNav>
                <button aria-label="上一行"><svg width="6" height="3"><path d="M0 3h6L3 0z" fill="#bbb" /></svg></button>
                <button aria-label="下一行"><Caret s={6} /></button>
                <button aria-label="其他"><svg width="8" height="7"><path d="M0 0h8v1H0zM1 3h6L4 6z" fill="#666" /></svg></button>
              </GalleryNav>
            </Gallery>
          </GroupBody>
          <GroupFoot><FootLabel>样式</FootLabel><Launcher aria-label="样式设置"><LauncherIcon /></Launcher></GroupFoot>
        </Group>
        <Group $w={86}>
          <GroupBody>
            <EditItem><Lens />查找<span /><Caret /></EditItem>
            <EditItem>
              <svg width="18" height="20" viewBox="0 0 18 20">{LETTER("ab", 10, 600, "#8b5ba5", 6, 8)}{LETTER("ac", 10, 600, accent, 12, 18)}<path d="M1 10v4h4M3.500 12l2 2-2 2" stroke={accent} fill="none" /></svg>
              替换
            </EditItem>
            <EditItem>
              <svg width="18" height="18" viewBox="0 0 18 18" fill="#fff" stroke="#777"><path d="M5 1v14l3.500-3 2.500 5 2-1-2.500-5h4z" /></svg>
              选择<Caret />
            </EditItem>
          </GroupBody>
          <GroupFoot><FootLabel>编辑</FootLabel></GroupFoot>
        </Group>
      </Ribbon>

      <Workspace>
        <NavPane>
          <PaneTop>
            <QuickButton aria-label="窗格选项"><Caret s={11} /></QuickButton>
            <QuickButton aria-label="关闭窗格"><svg width="12" height="12" viewBox="0 0 12 12" stroke="#666" strokeWidth="2"><path d="M1 1l10 10M11 1L1 11" /></svg></QuickButton>
          </PaneTop>
          <PaneSearch><input aria-label="搜索文档" /><Lens s={14} c="#2f5273" /><Caret s={6} /></PaneSearch>
          <PaneTabs><Tab>面</Tab><Tab>结果</Tab></PaneTabs>
          <PaneJump aria-label="跳到开头"><svg width="8" height="7"><path d="M0 0h8v1H0zM0 7h8L4 2z" fill="#444" /></svg></PaneJump>
          <Outline>
            {["建，读取pdf", "pdf获取数据", "析pdf 中的...", "df一般文本...", "CR", "他"].map((t, i) => (
              <OutlineItem key={t} $on={i === 5}><a href="#doc">{t}</a></OutlineItem>
            ))}
          </Outline>
        </NavPane>
        <RulerColumn>
          <Corner aria-label="制表符"><svg width="8" height="8"><path d="M1 0v7h7" fill="none" stroke="#555" strokeWidth="2" /></svg></Corner>
          <VRuler>
            {Array.from({ length: 31 }, (_, i) => <VCell key={i}><span>{i === 2 ? "" : i + 1}</span></VCell>)}
            <VBand $y={-3} /><VBand $y={41} /><VBand $y={80} /><VBand $y={116} />
          </VRuler>
        </RulerColumn>
        <DocColumn id="doc">
          <HRuler>
            {[8, 6, 4, 2].map((n) => <HCell key={n}>{n}</HCell>)}
            <HCell />
            {Array.from({ length: 23 }, (_, i) => <HCell key={i}>{i * 2 + 2}</HCell>)}
            <HEnd />
            {[139, 312, 485, 658].map((x) => <HMark key={x} $x={x}><Hatch /></HMark>)}
            <HMark $x={835} $w={10}><Hatch /></HMark>
          </HRuler>
          <Paper>
            <MarginMark /><MarginMark $right />
            <Grid rows={3} cols={4} plain />
            <P /><P /><P />
            <Grid rows={3} cols={4} />
            <P />
            <Grid rows={3} cols={5} />
            <P /><P />
            <Grid rows={5} cols={6} />
            <P />
          </Paper>
        </DocColumn>
      </Workspace>

      <Status>
        <StatusLeft>
          <span>5 页</span>
          <span>515 个字</span>
          <svg width="18" height="14" viewBox="0 0 18 14" fill="none" stroke="#555"><path d="M8.500 1.500v11M.5.5h6l2 1 2-1h6v12h-6l-2 1-2-1h-6zM11 9l5-6" /></svg>
          <span>中文(中国)</span>
          <svg width="15" height="15" viewBox="0 0 15 15"><path d="M4.500 2.500h10v12h-12V6" fill="none" stroke="#555" /><circle cx="3.5" cy="3.5" r="3.5" fill="#555" /><path d="M8 3h6v3H8zM4 8.500h9M4 11.500h9" stroke="#555" strokeDasharray="2 1" fill="#555" /></svg>
        </StatusLeft>
        <StatusRight>
          <ViewButton aria-label="阅读视图"><svg width="14" height="12" fill="none" stroke="#555"><path d="M.5.5h5.500l1 1 1-1h5.500v10H8l-1 1-1-1H.5zM7 1v10M2 3.500h3M2 5.500h3M2 7.500h3M9 3.500h3M9 5.500h3M9 7.500h3" /></svg></ViewButton>
          <ViewButton $on aria-label="页面视图"><svg width="14" height="13" fill="none" stroke="#555"><path d="M.5.5h13v12H.5zM2 3.500h10M2 5.500h10M2 7.500h10M2 9.500h10" /></svg></ViewButton>
          <ViewButton aria-label="Web 版式"><svg width="15" height="13" fill="none" stroke="#555"><path d="M7 10.500H.5V.5h11V5M2 3.500h8M2 5.500h6M2 7.500h5" /><circle cx="10.5" cy="8.5" r="3.5" fill="#777" /></svg></ViewButton>
          <QuickButton aria-label="缩小"><svg width="14" height="4"><path d="M4 2h9" stroke="#555" strokeWidth="2" /></svg></QuickButton>
          <Zoom type="range" aria-label="缩放" defaultValue={49} />
        </StatusRight>
      </Status>

      <Pointer width="14" height="20" viewBox="0 0 14 20"><path d="M1 1v15l3.500-3 2.500 6 2.500-1L7 12h5z" fill="#fff" stroke="#222" /></Pointer>

      <Dialog onSubmit={(e) => e.preventDefault()}>
        <DialogTitle>
          <svg width="21" height="20" viewBox="0 0 21 20" fill="none"><path d="M4 13C5 4 9 1 13 1s7 5 6 12l1 6-8-2" stroke="#a565a8" strokeWidth="3" /><circle cx="12" cy="10" r="5" stroke="#d8486c" strokeWidth="2.5" /><path d="M0 13l5-3v6zM9 15l3-3 3 6" fill="#2ba38c" /></svg>
          <span>表格、图表</span>
          <QuickButton type="button" aria-label="关闭"><svg width="13" height="13" stroke="#fff" strokeWidth="1.3"><path d="M.5.5l12 12M12.500.5l-12 12" /></svg></QuickButton>
        </DialogTitle>
        <DialogBody>
          <Box>
            <legend>总体设置</legend>
            <Line $h={28}>
              <Field>表格调整总次数设置：<Select v="4" w={74} /></Field>
              <Field $gap $push>第<Select v="1" w={74} />次表格调整</Field>
            </Line>
            <Line $h={28}>
              <Field>表格位置选择：<Select v="整个表格" w={105} /></Field>
              <Field $gap><Select v="1" w={61} off />行</Field>
              <Field $gap><Select v="1" w={60} off />列</Field>
            </Line>
            <Line $h={34}>
              <Field>应用位置选择：<Select v="全部框线" w={90} /></Field>
              <Field><Select v="下边框线" w={90} off /></Field>
              <Push type="button" $red>填充空表格</Push>
            </Line>
          </Box>
          <Box>
            <legend>格式设置</legend>
            <Line $h={31}>
              <Field>边框设置：样式：<Select v="无边框" w={73} /></Field>
              <Field>宽度：<Select v="0.5磅" w={73} /></Field>
              <Field $push>边框颜色：<Swatch type="button" aria-label="边框颜色" /></Field>
            </Line>
            <Line $h={31}>
              <Field>表格属性：宽度：<Text $w={51} defaultValue="100" /></Field>
              <Field><Select v="百分比" w={75} /></Field>
              <Field $push>对齐方式：<Select v="居中" w={75} /></Field>
            </Line>
            <Line $h={31}>
              <Field>行高：<Select v="自动" w={75} /></Field>
              <Text $w={50} aria-label="行高" defaultValue="0" disabled />
              <Field><Select v="磅" w={60} off /></Field>
              <Field $push>列宽：<Text $w={50} defaultValue="1" /></Field>
              <Field><Select v="厘米" w={75} /></Field>
            </Line>
            <Line $h={30}>
              <Field>单元格：对齐方式：<Select v="居中" w={75} /></Field>
              <Field $push $pr={38}>背景色：<Text $w={97} defaultValue="-16777216" /></Field>
            </Line>
            <Line $h={29}>
              <Field $gap><Check type="checkbox" />合并</Field>
              <Field>左上角：<Select v="1" w={40} off /></Field>行
              <Field $gap><Select v="1" w={40} off />列</Field>
              <Field $push>右下角：<Select v="1" w={40} off /></Field>行
              <Field $gap><Select v="1" w={40} off />列</Field>
            </Line>
            <Line $h={27}>
              <Field $gap><Check type="checkbox" defaultChecked />修改段落格式</Field>
              <Field><Select v="335正文" w={113} /></Field>
              <Field $gap><Check type="checkbox" />自动调整表格</Field>
              <Field><Select v="固定列宽" w={90} off /></Field>
            </Line>
          </Box>
          <Pair>
            <Box $bottom={11}>
              <legend>保存设置</legend>
              <Line $h={50}><Field $gap><Radio type="radio" name="scope" checked={scope === "sel"} onChange={() => setScope("sel")} />根据选择内容</Field></Line>
              <Line $h={29}><Field $gap><Radio type="radio" name="scope" checked={scope === "all"} onChange={() => setScope("all")} />文档所有内容</Field></Line>
            </Box>
            <Box $bottom={11}>
              <legend>我的格式库</legend>
              <Line $h={48}><Field>格式名称：<Text $w={110} defaultValue="335三线表" /></Field><Push type="button">新建格式</Push></Line>
              <Line $h={34}><Field>格式名称：<Select v="335三线表" w={110} /></Field><Push type="button">修改格式</Push></Line>
            </Box>
          </Pair>
          <Actions>
            <BigButton type="button">快速选择</BigButton>
            <BigButton type="button">读取格式</BigButton>
            <BigButton type="button">应用格式</BigButton>
          </Actions>
        </DialogBody>
      </Dialog>

      <Taskbar>
        <Apps>
          {apps.map((a) => (
            <App1 key={a.name} $state={a.state} aria-label={a.name}>
              <svg width="30" height="30" viewBox="0 0 30 30" overflow="visible">{a.art}</svg>
            </App1>
          ))}
        </Apps>
        <Tray>
          <TrayButton aria-label="显示隐藏的图标"><svg width="17" height="10" fill="none" stroke="#fff" strokeWidth="1.5"><path d="M1 9l7.500-7.500L16 9" /></svg></TrayButton>
          <TrayButton aria-label="录屏"><svg width="20" height="20"><rect width="20" height="20" rx="4" fill="#f0803c" /><circle cx="10" cy="10" r="8" fill="#fbd9b5" /><path d="M14 7a5 5 0 1 0 1 4h-4" fill="none" stroke="#e8652a" strokeWidth="2.5" /></svg></TrayButton>
          <TrayButton aria-label="QQ"><svg width="20" height="20"><ellipse cx="8" cy="6" rx="5" ry="6" fill="#111" /><path d="M3 9h10l2 8H2z" fill="#e34a3c" /><ellipse cx="7" cy="15" rx="4" ry="4" fill="#eee" /><circle cx="14" cy="14" r="5.5" fill="#f6c28a" /><path d="M10 14h8" stroke="#b86a2a" /><ellipse cx="8" cy="7" rx="2.5" ry="1" fill="#f2a313" /></svg></TrayButton>
          <TrayButton aria-label="电池"><svg width="20" height="14" fill="none" stroke="#fff"><path d="M6.500 4.500h12v8h-13V9M2 0v3M5 0v3M.5 3.500h6v2l-3 2.500-3-2.500zM3.500 8v4.500h2" /><path d="M8 6h9v5H8z" fill="#fff" /></svg></TrayButton>
          <TrayButton aria-label="网络"><svg width="17" height="16" fill="none" stroke="#dfe6ee" strokeWidth="1.3"><path d="M1 15A14 14 0 0 1 15 1M5 15A10 10 0 0 1 15 5M9 15a6 6 0 0 1 6-6" /><circle cx="14" cy="14" r="1.5" fill="#fff" /></svg></TrayButton>
          <TrayButton aria-label="音量"><svg width="21" height="17" fill="none" stroke="#fff" strokeWidth="1.2"><path d="M1 6h3l4-4v13l-4-4H1zM11 6q1.500 2.500 0 5M14 4q3 4.500 0 9" /><path d="M17 1.500q4.500 7 0 14" stroke="#8a97a8" /></svg></TrayButton>
          <TrayButton aria-label="中文输入"><svg width="16" height="18" fill="none" stroke="#fff" strokeWidth="1.3"><path d="M1 4.500h14v7H1zM8 0v18" /></svg></TrayButton>
          <TrayButton $w={40} aria-label="搜狗输入法"><svg width="20" height="20" viewBox="0 0 20 20"><path d="M1 3l16-2 2 14-15 4z" fill="#e0502f" /><path d="M15 5C9 3 5 5 6 8s8 1 8 4-5 4-10 2" stroke="#fff" strokeWidth="2.5" fill="none" /></svg></TrayButton>
          <Clock><span>23:18 周</span><span>2021/5</span></Clock>
        </Tray>
      </Taskbar>
    </Screen>
  );
}
